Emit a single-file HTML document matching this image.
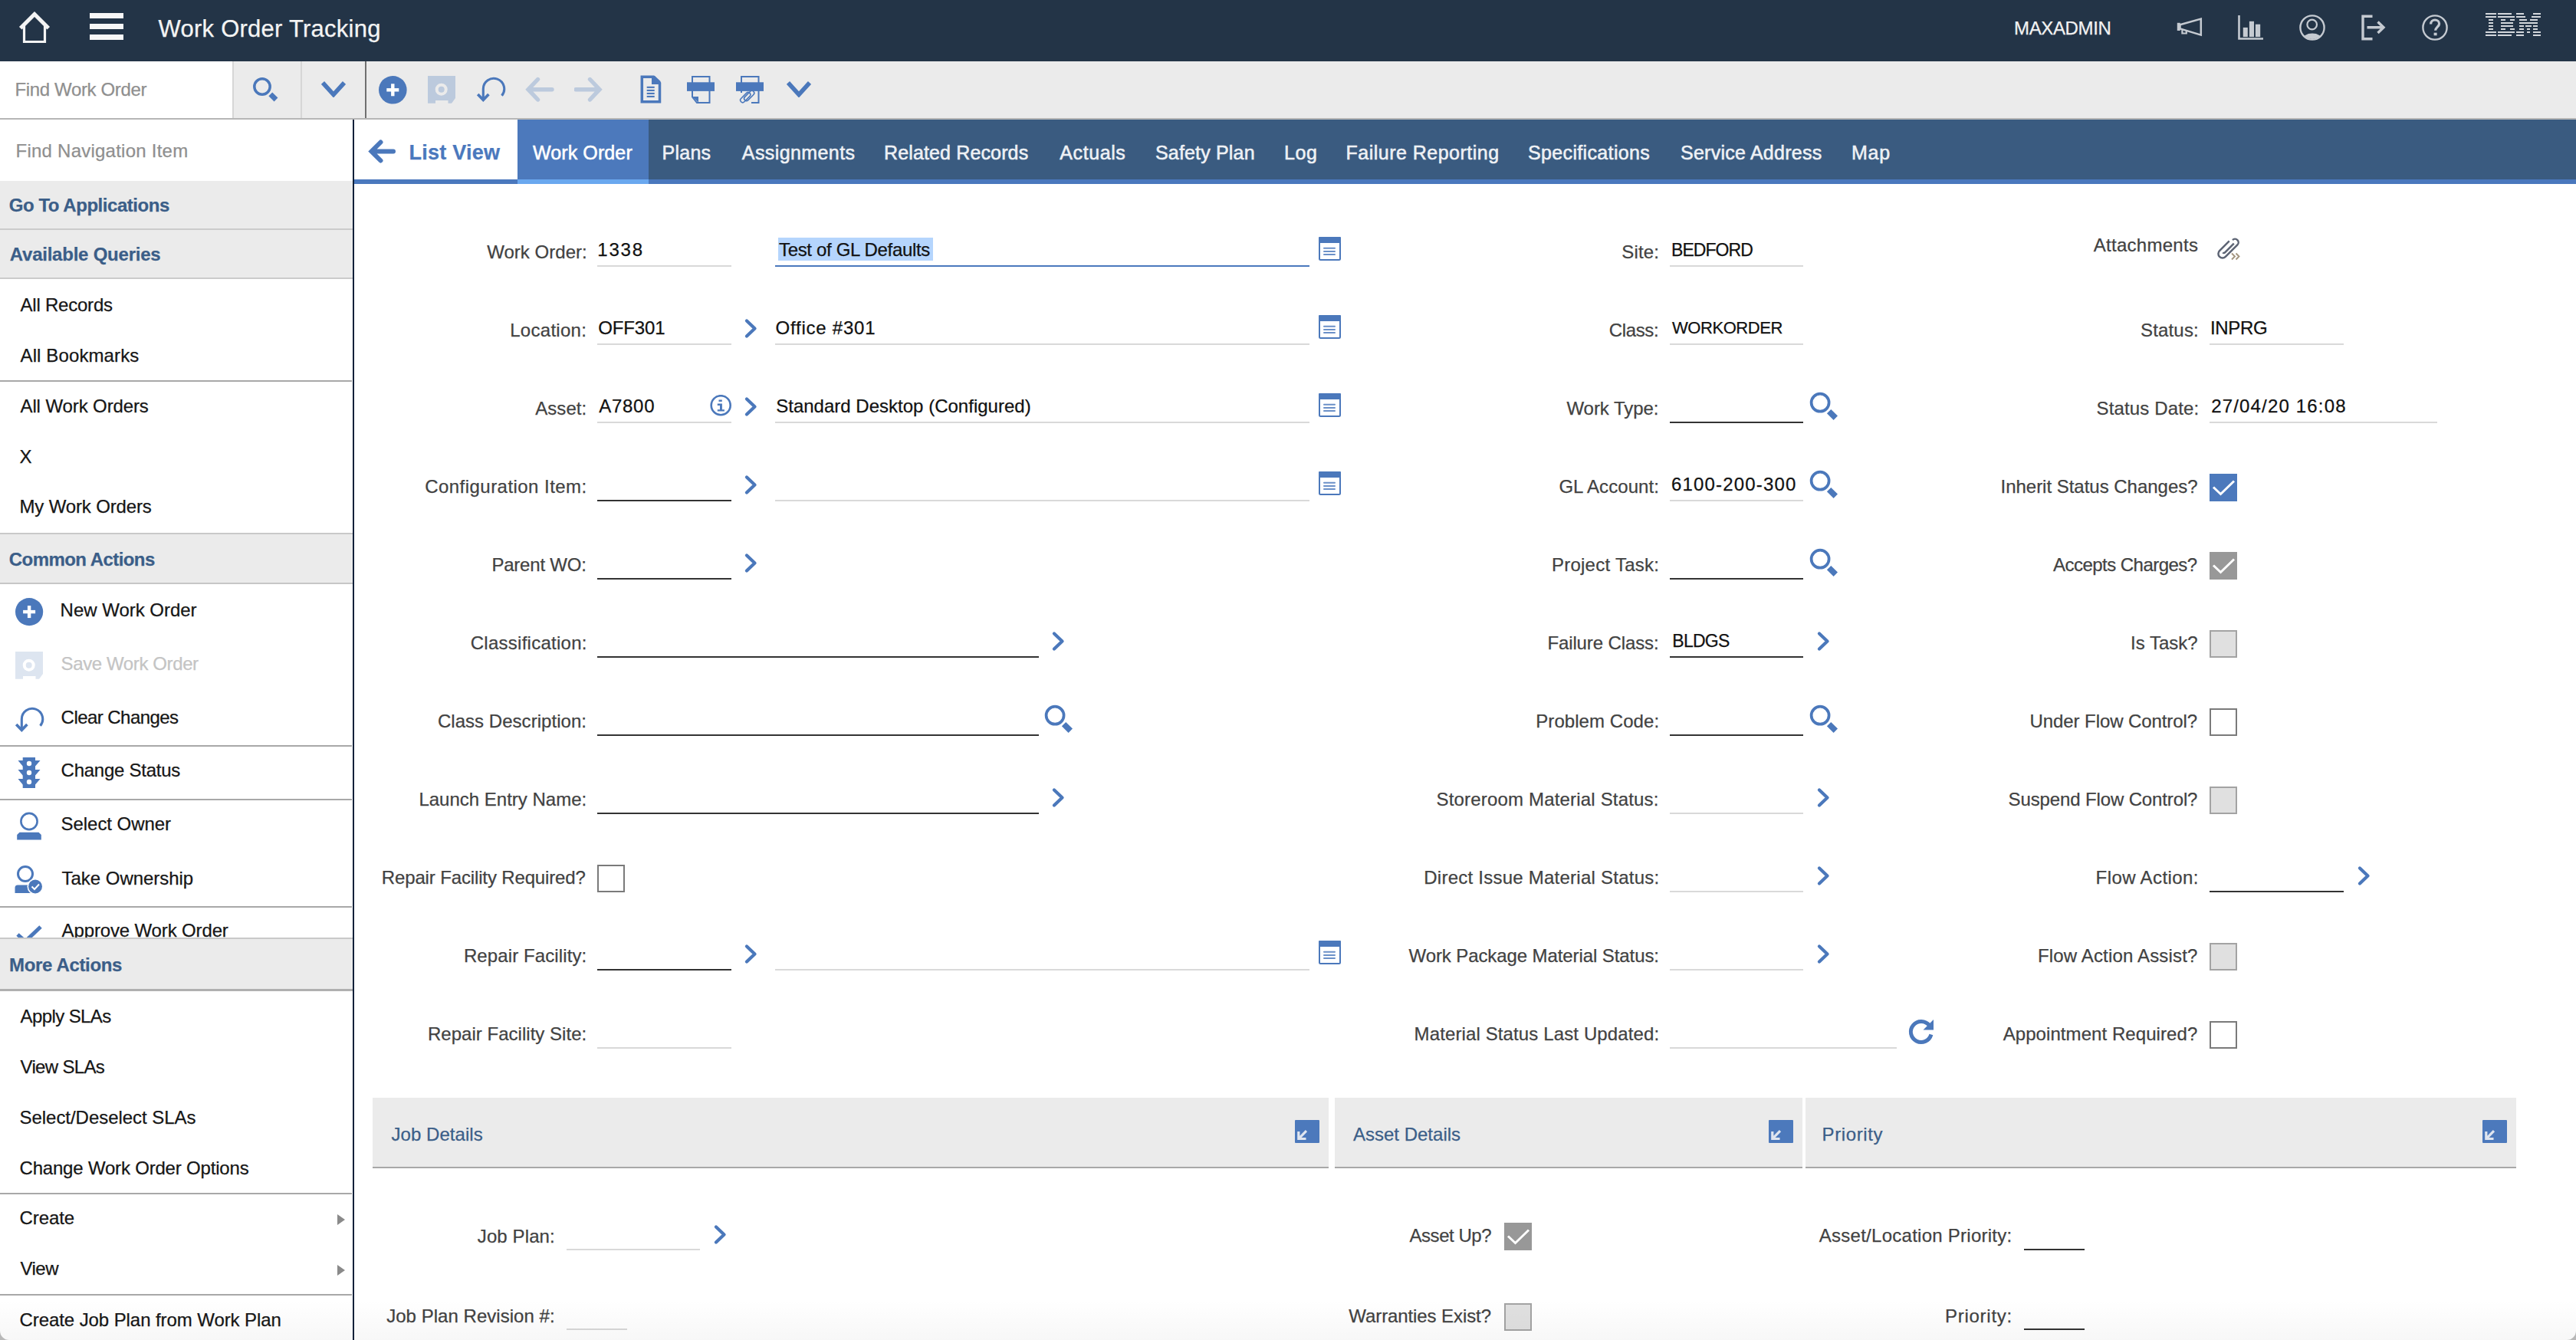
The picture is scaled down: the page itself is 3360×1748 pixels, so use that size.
<!DOCTYPE html><html><head><meta charset="utf-8"><style>html,body{margin:0;padding:0;width:3360px;height:1748px;overflow:hidden;background:#fff}body{position:relative;font-family:"Liberation Sans", sans-serif}.t{position:absolute;white-space:nowrap;-webkit-text-stroke:0.25px currentColor}.r{position:absolute;display:block}</style></head><body>
<div class="r" style="left:0px;top:0px;width:3360px;height:80px;background:#233447;"></div>
<svg class="r" style="left:22.0px;top:12.0px" width="48" height="48" viewBox="0 0 48 48"><path d="M6.5 23 L23 6.5 L39.5 23" fill="none" stroke="#f4f4f4" stroke-width="5" stroke-linecap="square"/><path d="M9.5 22 V42.5 H36.5 V22" fill="none" stroke="#f4f4f4" stroke-width="3.2"/></svg>
<div class="r" style="left:117px;top:17px;width:44px;height:7px;background:#f7f7f7;"></div>
<div class="r" style="left:117px;top:31px;width:44px;height:7px;background:#f7f7f7;"></div>
<div class="r" style="left:117px;top:45px;width:44px;height:7px;background:#f7f7f7;"></div>
<div class="t" style="left:206.5px;top:22.1px;font-size:31px;line-height:31px;color:#f4f4f4;letter-spacing:0.25px;">Work Order Tracking</div>
<div class="t" style="left:2627.0px;top:25.3px;font-size:24px;line-height:24px;color:#f2f2f2;letter-spacing:-0.36px;">MAXADMIN</div>
<svg class="r" style="left:2836.0px;top:18.0px" width="40" height="34" viewBox="0 0 40 34"><path d="M7.5 14.2 L34.8 6.6 V27.6 L7.5 19.4 Z" fill="none" stroke="#c5cad1" stroke-width="2.5" stroke-linejoin="miter"/><rect x="3.8" y="11.8" width="4" height="10.2" fill="#c5cad1"/><path d="M10.4 20.5 V25.5 H15.8 V22" fill="none" stroke="#c5cad1" stroke-width="2.2"/></svg>
<svg class="r" style="left:2918.0px;top:18.0px" width="36" height="36" viewBox="0 0 36 36"><path d="M2.5 2 V32.5 H34" fill="none" stroke="#c5cad1" stroke-width="2.6"/><rect x="7.8" y="17.9" width="6" height="12.2" fill="#c5cad1"/><rect x="15.9" y="9.8" width="6.1" height="20.3" fill="#c5cad1"/><rect x="23.9" y="13.7" width="6.3" height="16.4" fill="#c5cad1"/></svg>
<svg class="r" style="left:2998.0px;top:18.0px" width="36" height="36" viewBox="0 0 36 36"><defs><clipPath id="uc"><circle cx="18" cy="18" r="15"/></clipPath></defs><circle cx="18" cy="18" r="15.6" fill="none" stroke="#c5cad1" stroke-width="2.4"/><circle cx="17.7" cy="14" r="6.3" fill="none" stroke="#c5cad1" stroke-width="2.2"/><ellipse cx="18" cy="34" rx="13" ry="8.5" fill="#c5cad1" clip-path="url(#uc)"/></svg>
<svg class="r" style="left:3078.0px;top:18.0px" width="36" height="36" viewBox="0 0 36 36"><path d="M16.5 3.3 H4 V32.7 H16.5" fill="none" stroke="#c5cad1" stroke-width="3.4"/><path d="M9.5 17.8 H30 M23.5 10.5 L31 17.8 L23.5 25" fill="none" stroke="#c5cad1" stroke-width="3.4"/></svg>
<svg class="r" style="left:3158.0px;top:18.0px" width="36" height="36" viewBox="0 0 36 36"><circle cx="18" cy="18" r="15.6" fill="none" stroke="#c5cad1" stroke-width="2.4"/><path d="M12.6 13.6 C12.6 9.8 15.2 8 18 8 C21 8 23.6 10 23.6 13 C23.6 16.7 18.6 17.6 18.6 21.8" fill="none" stroke="#c5cad1" stroke-width="3.2"/><rect x="16.6" y="24.7" width="4" height="3.6" fill="#c5cad1"/></svg>
<svg class="r" style="left:3240.0px;top:16.0px" width="78" height="34" viewBox="0 0 78 34"><rect x="2" y="1" width="14" height="2" fill="#d3d7dc"/><rect x="18" y="1" width="18" height="2" fill="#d3d7dc"/><rect x="42" y="1" width="10" height="2" fill="#d3d7dc"/><rect x="64" y="1" width="10" height="2" fill="#d3d7dc"/><rect x="2" y="5" width="14" height="2" fill="#d3d7dc"/><rect x="18" y="5" width="22" height="2" fill="#d3d7dc"/><rect x="42" y="5" width="12" height="2" fill="#d3d7dc"/><rect x="62" y="5" width="12" height="2" fill="#d3d7dc"/><rect x="6" y="9" width="6" height="2" fill="#d3d7dc"/><rect x="22" y="9" width="6" height="2" fill="#d3d7dc"/><rect x="34" y="9" width="6" height="2" fill="#d3d7dc"/><rect x="46" y="9" width="10" height="2" fill="#d3d7dc"/><rect x="60" y="9" width="10" height="2" fill="#d3d7dc"/><rect x="6" y="13" width="6" height="2" fill="#d3d7dc"/><rect x="22" y="13" width="16" height="2" fill="#d3d7dc"/><rect x="46" y="13" width="24" height="2" fill="#d3d7dc"/><rect x="6" y="17" width="6" height="2" fill="#d3d7dc"/><rect x="22" y="17" width="16" height="2" fill="#d3d7dc"/><rect x="46" y="17" width="6" height="2" fill="#d3d7dc"/><rect x="54" y="17" width="8" height="2" fill="#d3d7dc"/><rect x="64" y="17" width="6" height="2" fill="#d3d7dc"/><rect x="6" y="21" width="6" height="2" fill="#d3d7dc"/><rect x="22" y="21" width="6" height="2" fill="#d3d7dc"/><rect x="34" y="21" width="6" height="2" fill="#d3d7dc"/><rect x="46" y="21" width="6" height="2" fill="#d3d7dc"/><rect x="56" y="21" width="4" height="2" fill="#d3d7dc"/><rect x="64" y="21" width="6" height="2" fill="#d3d7dc"/><rect x="2" y="25" width="14" height="2" fill="#d3d7dc"/><rect x="18" y="25" width="22" height="2" fill="#d3d7dc"/><rect x="42" y="25" width="10" height="2" fill="#d3d7dc"/><rect x="56" y="25" width="4" height="2" fill="#d3d7dc"/><rect x="64" y="25" width="10" height="2" fill="#d3d7dc"/><rect x="2" y="29" width="14" height="2" fill="#d3d7dc"/><rect x="18" y="29" width="18" height="2" fill="#d3d7dc"/><rect x="42" y="29" width="10" height="2" fill="#d3d7dc"/><rect x="64" y="29" width="10" height="2" fill="#d3d7dc"/></svg>
<div class="r" style="left:0px;top:80px;width:3360px;height:74px;background:#ebebeb;"></div>
<div class="r" style="left:0px;top:154px;width:3360px;height:2px;background:#b6b6b6;"></div>
<div class="r" style="left:0px;top:80px;width:303px;height:74px;background:#ffffff;"></div>
<div class="r" style="left:303px;top:80px;width:2px;height:74px;background:#d6d6d6;"></div>
<div class="r" style="left:392px;top:80px;width:2px;height:74px;background:#d6d6d6;"></div>
<div class="r" style="left:476px;top:80px;width:2px;height:74px;background:#707070;"></div>
<div class="t" style="left:19.5px;top:105.3px;font-size:24px;line-height:24px;color:#8f8f8f;letter-spacing:-0.36px;">Find Work Order</div>
<svg class="r" style="left:328.0px;top:100.0px" width="40" height="40" viewBox="0 0 40 40"><circle cx="14" cy="13" r="10.2" fill="none" stroke="#4b78bb" stroke-width="3.5"/><path d="M24.8 22.8 L32 30" stroke="#4b78bb" stroke-width="6.8"/></svg>
<svg class="r" style="left:419.0px;top:106.0px" width="32" height="21" viewBox="0 0 32 21"><path d="M2 2 L16.0 17.4 L30 2" fill="none" stroke="#4b78bb" stroke-width="5.6" stroke-linejoin="miter" stroke-miterlimit="10"/></svg>
<svg class="r" style="left:493.7px;top:98.6px" width="37" height="37" viewBox="0 0 37 37"><circle cx="18.3" cy="18.3" r="18.3" fill="#4b78bb"/><rect x="10.3" y="16.1" width="16" height="4.4" fill="#ffffff"/><rect x="16.1" y="10.3" width="4.4" height="16" fill="#ffffff"/></svg>
<svg class="r" style="left:558.0px;top:99.0px" width="36" height="36" viewBox="0 0 36 36"><path d="M0 0 H36 V29 L31 35.8 H0 Z" fill="#bccadd"/><rect x="10" y="32" width="16.5" height="4" fill="#ebebeb"/><circle cx="17.7" cy="17.7" r="8" fill="#ebebeb"/><circle cx="17.7" cy="17.7" r="4" fill="#bccadd"/></svg>
<svg class="r" style="left:621.0px;top:98.5px" width="40" height="38" viewBox="0 0 40 38"><path d="M33.5 25.8 A13.7 13.7 0 1 0 9.3 17 V30" fill="none" stroke="#4b78bb" stroke-width="3.1"/><path d="M2.2 24 L9.3 31.3 L16.4 24" fill="none" stroke="#4b78bb" stroke-width="3.6"/></svg>
<svg class="r" style="left:685.0px;top:99.0px" width="38" height="36" viewBox="0 0 38 36"><path d="M35 17.7 H6 M16.5 4.5 L4 17.7 L16.5 31" fill="none" stroke="#bccadd" stroke-width="5.4" stroke-linecap="round"/></svg>
<svg class="r" style="left:749.0px;top:99.0px" width="38" height="36" viewBox="0 0 38 36"><path d="M2 17.7 H31 M20.5 4.5 L33 17.7 L20.5 31" fill="none" stroke="#bccadd" stroke-width="5.4" stroke-linecap="round"/></svg>
<svg class="r" style="left:835.0px;top:98.0px" width="28" height="38" viewBox="0 0 28 38"><path d="M2.3 2.3 H17.5 L25.5 10.5 V34.8 H2.3 Z" fill="none" stroke="#4b78bb" stroke-width="3.5"/><path d="M15 1 V12 H26.5 V8 L19 1 Z" fill="#4b78bb"/><rect x="8.7" y="14.8" width="10" height="2.1" fill="#4b78bb"/><rect x="8.7" y="18.9" width="10" height="2.1" fill="#4b78bb"/><rect x="8.7" y="22.9" width="10" height="2.1" fill="#4b78bb"/><rect x="8.7" y="26.9" width="10" height="2.1" fill="#4b78bb"/></svg>
<svg class="r" style="left:896.0px;top:99.0px" width="36" height="36" viewBox="0 0 36 36"><path d="M7 10 V1 H29.5 V10" fill="none" stroke="#4b78bb" stroke-width="2"/><rect x="0" y="8.3" width="36" height="11.6" fill="#4b78bb"/><path d="M7 19 V27.5 L13 35 H29.5 V19" fill="none" stroke="#4b78bb" stroke-width="2"/><path d="M7 27 H15 V35 Z" fill="#4b78bb"/></svg>
<svg class="r" style="left:960.0px;top:99.0px" width="36" height="36" viewBox="0 0 36 36"><path d="M7 10 V1 H29.5 V10" fill="none" stroke="#4b78bb" stroke-width="2"/><rect x="0" y="8.3" width="36" height="11.6" fill="#4b78bb"/><path d="M7 19 V22 M29.5 19 V35 H20" fill="none" stroke="#4b78bb" stroke-width="2"/><g transform="rotate(-45 14 27)" fill="none" stroke="#4b78bb" stroke-width="1.6"><rect x="4" y="23.5" width="16" height="6" rx="3"/><rect x="9" y="25.5" width="16" height="6" rx="3"/></g></svg>
<svg class="r" style="left:1026.0px;top:106.0px" width="32" height="21" viewBox="0 0 32 21"><path d="M2 2 L16.0 17.4 L30 2" fill="none" stroke="#4b78bb" stroke-width="5.6" stroke-linejoin="miter" stroke-miterlimit="10"/></svg>
<div class="r" style="left:460px;top:156px;width:2px;height:1592px;background:#10213a;"></div>
<div class="t" style="left:20.5px;top:185.1px;font-size:24px;line-height:24px;color:#8f8f8f;letter-spacing:0.24px;">Find Navigation Item</div>
<div class="r" style="left:0px;top:236px;width:460px;height:62px;background:#ebebeb;"></div>
<div class="r" style="left:0px;top:298px;width:460px;height:2px;background:#cbcbcb;"></div>
<div class="t" style="left:11.8px;top:256.4px;font-size:24px;line-height:24px;color:#3b5e88;font-weight:700;letter-spacing:-0.46px;">Go To Applications</div>
<div class="r" style="left:0px;top:300px;width:460px;height:62px;background:#ebebeb;"></div>
<div class="r" style="left:0px;top:362px;width:460px;height:2px;background:#cbcbcb;"></div>
<div class="t" style="left:12.8px;top:319.7px;font-size:24px;line-height:24px;color:#3b5e88;font-weight:700;letter-spacing:-0.23px;">Available Queries</div>
<div class="t" style="left:26.5px;top:386.0px;font-size:24px;line-height:24px;color:#161616;letter-spacing:-0.22px;">All Records</div>
<div class="t" style="left:26.5px;top:451.7px;font-size:24px;line-height:24px;color:#161616;letter-spacing:0.12px;">All Bookmarks</div>
<div class="r" style="left:0px;top:496px;width:459px;height:2px;background:#a8a8a8;"></div>
<div class="t" style="left:26.5px;top:517.7px;font-size:24px;line-height:24px;color:#161616;letter-spacing:-0.11px;">All Work Orders</div>
<div class="t" style="left:25.5px;top:583.5px;font-size:24px;line-height:24px;color:#161616;">X</div>
<div class="t" style="left:25.5px;top:648.7px;font-size:24px;line-height:24px;color:#161616;letter-spacing:-0.15px;">My Work Orders</div>
<div class="r" style="left:0px;top:696px;width:460px;height:64px;background:#ebebeb;"></div>
<div class="r" style="left:0px;top:760px;width:460px;height:2px;background:#c6c6c6;"></div>
<div class="t" style="left:11.8px;top:718.0px;font-size:24px;line-height:24px;color:#3b5e88;font-weight:700;letter-spacing:-0.56px;">Common Actions</div>
<div class="r" style="left:0px;top:695px;width:460px;height:2px;background:#c9c9c9;"></div>
<div class="t" style="left:78.6px;top:783.7px;font-size:24px;line-height:24px;color:#161616;letter-spacing:-0.02px;">New Work Order</div>
<div class="t" style="left:79.6px;top:853.8px;font-size:24px;line-height:24px;color:#c4c4c4;letter-spacing:-0.39px;">Save Work Order</div>
<div class="t" style="left:79.6px;top:923.6px;font-size:24px;line-height:24px;color:#161616;letter-spacing:-0.55px;">Clear Changes</div>
<div class="r" style="left:0px;top:972px;width:459px;height:2px;background:#a8a8a8;"></div>
<div class="t" style="left:79.6px;top:993.3px;font-size:24px;line-height:24px;color:#161616;letter-spacing:-0.25px;">Change Status</div>
<div class="r" style="left:0px;top:1042px;width:459px;height:2px;background:#a8a8a8;"></div>
<div class="t" style="left:79.6px;top:1063.4px;font-size:24px;line-height:24px;color:#161616;letter-spacing:-0.06px;">Select Owner</div>
<div class="t" style="left:80.6px;top:1133.6px;font-size:24px;line-height:24px;color:#161616;letter-spacing:-0.04px;">Take Ownership</div>
<div class="r" style="left:0px;top:1182px;width:459px;height:2px;background:#a8a8a8;"></div>
<div class="r" style="left:0;top:1184px;width:460px;height:40px;overflow:hidden">
<div class="t" style="left:80.6px;top:17.7px;font-size:24px;line-height:24px;color:#161616;letter-spacing:-0.14px;">Approve Work Order</div>
<svg class="r" style="left:20.0px;top:21.0px" width="36" height="24" viewBox="0 0 36 24"><path d="M3 14 L13 23 L33 4" fill="none" stroke="#4b78bb" stroke-width="5"/></svg>
</div>
<div class="r" style="left:0px;top:1224px;width:460px;height:66px;background:#ebebeb;"></div>
<div class="r" style="left:0px;top:1223px;width:460px;height:2px;background:#c9c9c9;"></div>
<div class="r" style="left:0px;top:1290px;width:460px;height:3px;background:#b0b0b0;"></div>
<div class="t" style="left:12.1px;top:1247.2px;font-size:24px;line-height:24px;color:#3b5e88;font-weight:700;letter-spacing:-0.35px;">More Actions</div>
<div class="t" style="left:26.5px;top:1313.9px;font-size:24px;line-height:24px;color:#161616;letter-spacing:-0.59px;">Apply SLAs</div>
<div class="t" style="left:26.5px;top:1380.1px;font-size:24px;line-height:24px;color:#161616;letter-spacing:-0.66px;">View SLAs</div>
<div class="t" style="left:25.5px;top:1445.6px;font-size:24px;line-height:24px;color:#161616;letter-spacing:-0.04px;">Select/Deselect SLAs</div>
<div class="t" style="left:25.5px;top:1511.8px;font-size:24px;line-height:24px;color:#161616;letter-spacing:-0.19px;">Change Work Order Options</div>
<div class="r" style="left:0px;top:1556px;width:459px;height:2px;background:#a8a8a8;"></div>
<div class="t" style="left:25.5px;top:1577.3px;font-size:24px;line-height:24px;color:#161616;letter-spacing:-0.08px;">Create</div>
<div class="t" style="left:26.5px;top:1643.2px;font-size:24px;line-height:24px;color:#161616;letter-spacing:-0.53px;">View</div>
<div class="r" style="left:0px;top:1688px;width:459px;height:2px;background:#a8a8a8;"></div>
<div class="t" style="left:25.5px;top:1710.2px;font-size:24px;line-height:24px;color:#161616;letter-spacing:-0.08px;">Create Job Plan from Work Plan</div>
<svg class="r" style="left:438.0px;top:1583.0px" width="14" height="16" viewBox="0 0 14 16"><path d="M2 1 L12 8 L2 15 Z" fill="#8a8a8a"/></svg>
<svg class="r" style="left:438.0px;top:1649.0px" width="14" height="16" viewBox="0 0 14 16"><path d="M2 1 L12 8 L2 15 Z" fill="#8a8a8a"/></svg>
<svg class="r" style="left:19.5px;top:780.3px" width="37" height="37" viewBox="0 0 37 37"><circle cx="18.1" cy="18.1" r="18.1" fill="#4b78bb"/><rect x="10.100000000000001" y="15.900000000000002" width="16" height="4.4" fill="#ffffff"/><rect x="15.900000000000002" y="10.100000000000001" width="4.4" height="16" fill="#ffffff"/></svg>
<svg class="r" style="left:20.0px;top:850.0px" width="36" height="36" viewBox="0 0 36 36"><path d="M0 0 H36 V29 L31 35.8 H0 Z" fill="#dde5f0"/><rect x="10" y="32" width="16.5" height="4" fill="#ffffff"/><circle cx="17.7" cy="17.7" r="8" fill="#ffffff"/><circle cx="17.7" cy="17.7" r="4" fill="#dde5f0"/></svg>
<svg class="r" style="left:19.0px;top:921.0px" width="40" height="38" viewBox="0 0 40 38"><path d="M33.5 25.8 A13.7 13.7 0 1 0 9.3 17 V30" fill="none" stroke="#4b78bb" stroke-width="3.1"/><path d="M2.2 24 L9.3 31.3 L16.4 24" fill="none" stroke="#4b78bb" stroke-width="3.6"/></svg>
<svg class="r" style="left:22.0px;top:986.0px" width="32" height="44" viewBox="0 0 32 44"><rect x="7.7" y="2" width="16.3" height="40" fill="#4b78bb"/><path d="M1.5 6 H30.5 L24 13.5 H7.7 Z M1.5 18 H30.5 L24 25.5 H7.7 Z M1.5 30 H30.5 L24 37.5 H7.7 Z" fill="#4b78bb"/><circle cx="16" cy="10" r="3.2" fill="#fff"/><circle cx="16" cy="22" r="3.2" fill="#fff"/><circle cx="16" cy="34" r="3.2" fill="#fff"/></svg>
<svg class="r" style="left:21.0px;top:1059.0px" width="34" height="38" viewBox="0 0 34 38"><circle cx="17" cy="12.5" r="10.6" fill="none" stroke="#4b78bb" stroke-width="2.6"/><path d="M1.2 36.5 V30 L4.5 26.7 H29.5 L32.8 30 V36.5 Z" fill="#4b78bb"/></svg>
<svg class="r" style="left:18.0px;top:1129.0px" width="40" height="38" viewBox="0 0 40 38"><ellipse cx="15" cy="11" rx="9.5" ry="9.5" fill="none" stroke="#4b78bb" stroke-width="3"/><path d="M1.5 36 V29 Q1.5 25.5 5 25.5 H22 V36 Z" fill="#4b78bb"/><circle cx="28" cy="27.5" r="10.5" fill="#fff"/><circle cx="28" cy="27.5" r="9" fill="#4b78bb"/><path d="M23.5 27.5 L27 31 L33 24.5" fill="none" stroke="#fff" stroke-width="2"/></svg>
<div class="r" style="left:462px;top:156px;width:2898px;height:78px;background:#3a5b80;"></div>
<div class="r" style="left:462px;top:234px;width:2898px;height:6px;background:#4a78bd;"></div>
<div class="r" style="left:462px;top:156px;width:213px;height:78px;background:#ffffff;"></div>
<div class="r" style="left:675px;top:156px;width:171px;height:78px;background:#4c79bc;"></div>
<div class="r" style="left:675px;top:234px;width:171px;height:6px;background:#6aa8ef;"></div>
<svg class="r" style="left:479.0px;top:180.0px" width="38" height="36" viewBox="0 0 38 36"><path d="M34 17.5 H7 M17.5 5.5 L5.5 17.5 L17.5 29.5" fill="none" stroke="#4b78bb" stroke-width="6" stroke-linecap="round"/></svg>
<div class="t" style="left:533.6px;top:185.5px;font-size:27px;line-height:27px;color:#4a78bd;font-weight:700;letter-spacing:0.22px;">List View</div>
<div class="t" style="left:695.0px;top:187.2px;font-size:25px;line-height:25px;color:#ffffff;letter-spacing:0.11px;-webkit-text-stroke:0.55px currentColor">Work Order</div>
<div class="t" style="left:863.5px;top:187.2px;font-size:25px;line-height:25px;color:#eef1f5;letter-spacing:0.25px;-webkit-text-stroke:0.55px currentColor">Plans</div>
<div class="t" style="left:967.8px;top:187.2px;font-size:25px;line-height:25px;color:#eef1f5;letter-spacing:0.41px;-webkit-text-stroke:0.55px currentColor">Assignments</div>
<div class="t" style="left:1153.0px;top:187.2px;font-size:25px;line-height:25px;color:#eef1f5;letter-spacing:0.14px;-webkit-text-stroke:0.55px currentColor">Related Records</div>
<div class="t" style="left:1382.3px;top:187.2px;font-size:25px;line-height:25px;color:#eef1f5;letter-spacing:0.58px;-webkit-text-stroke:0.55px currentColor">Actuals</div>
<div class="t" style="left:1507.0px;top:187.2px;font-size:25px;line-height:25px;color:#eef1f5;letter-spacing:0.17px;-webkit-text-stroke:0.55px currentColor">Safety Plan</div>
<div class="t" style="left:1675.0px;top:187.2px;font-size:25px;line-height:25px;color:#eef1f5;letter-spacing:0.60px;-webkit-text-stroke:0.55px currentColor">Log</div>
<div class="t" style="left:1755.6px;top:187.2px;font-size:25px;line-height:25px;color:#eef1f5;letter-spacing:0.48px;-webkit-text-stroke:0.55px currentColor">Failure Reporting</div>
<div class="t" style="left:1993.0px;top:187.2px;font-size:25px;line-height:25px;color:#eef1f5;letter-spacing:0.35px;-webkit-text-stroke:0.55px currentColor">Specifications</div>
<div class="t" style="left:2192.0px;top:187.2px;font-size:25px;line-height:25px;color:#eef1f5;letter-spacing:0.25px;-webkit-text-stroke:0.55px currentColor">Service Address</div>
<div class="t" style="left:2415.0px;top:187.2px;font-size:25px;line-height:25px;color:#eef1f5;letter-spacing:0.75px;-webkit-text-stroke:0.55px currentColor">Map</div>
<div class="t" style="left:635.2px;top:317.2px;font-size:24px;line-height:24px;color:#424242;letter-spacing:0.03px;">Work Order:</div>
<div class="t" style="left:665.2px;top:419.2px;font-size:24px;line-height:24px;color:#424242;letter-spacing:0.29px;">Location:</div>
<div class="t" style="left:698.2px;top:521.2px;font-size:24px;line-height:24px;color:#424242;letter-spacing:0.06px;">Asset:</div>
<div class="t" style="left:554.2px;top:623.2px;font-size:24px;line-height:24px;color:#424242;letter-spacing:0.46px;">Configuration Item:</div>
<div class="t" style="left:641.4px;top:725.2px;font-size:24px;line-height:24px;color:#424242;letter-spacing:-0.21px;">Parent WO:</div>
<div class="t" style="left:613.7px;top:827.2px;font-size:24px;line-height:24px;color:#424242;letter-spacing:0.27px;">Classification:</div>
<div class="t" style="left:570.9px;top:929.2px;font-size:24px;line-height:24px;color:#424242;letter-spacing:0.04px;">Class Description:</div>
<div class="t" style="left:546.4px;top:1031.2px;font-size:24px;line-height:24px;color:#424242;">Launch Entry Name:</div>
<div class="t" style="left:497.8px;top:1133.2px;font-size:24px;line-height:24px;color:#424242;letter-spacing:-0.14px;">Repair Facility Required?</div>
<div class="t" style="left:604.9px;top:1235.2px;font-size:24px;line-height:24px;color:#424242;letter-spacing:0.11px;">Repair Facility:</div>
<div class="t" style="left:557.9px;top:1337.2px;font-size:24px;line-height:24px;color:#424242;letter-spacing:0.03px;">Repair Facility Site:</div>
<div class="r" style="left:1015px;top:310px;width:202px;height:30px;background:#b5d5fd;"></div>
<div class="t" style="left:779.3px;top:313.7px;font-size:24px;line-height:24px;color:#111111;letter-spacing:1.77px;">1338</div>
<div class="t" style="left:1016.0px;top:313.7px;font-size:24px;line-height:24px;color:#111111;letter-spacing:-0.33px;">Test of GL Defaults</div>
<div class="t" style="left:780.3px;top:415.7px;font-size:24px;line-height:24px;color:#111111;letter-spacing:-0.16px;">OFF301</div>
<div class="t" style="left:1011.5px;top:415.7px;font-size:24px;line-height:24px;color:#111111;letter-spacing:0.77px;">Office #301</div>
<div class="t" style="left:781.3px;top:517.7px;font-size:24px;line-height:24px;color:#111111;letter-spacing:0.70px;">A7800</div>
<div class="t" style="left:1012.2px;top:517.7px;font-size:24px;line-height:24px;color:#111111;letter-spacing:0.01px;">Standard Desktop (Configured)</div>
<div class="r" style="left:779px;top:346px;width:175px;height:2px;background:#d9d9d9;"></div>
<div class="r" style="left:1011px;top:346px;width:697px;height:2px;background:#4a78bd;"></div>
<svg class="r" style="left:1719.5px;top:309.0px" width="29" height="31" viewBox="0 0 29 31"><rect x="1" y="1" width="27" height="29" rx="1.5" fill="none" stroke="#4b78bb" stroke-width="2"/><rect x="0" y="0" width="29" height="8" rx="1" fill="#4b78bb"/><rect x="6" y="13.8" width="16" height="2" rx="1" fill="#6b90c8"/><rect x="6" y="17.9" width="16" height="2" rx="1" fill="#6b90c8"/><rect x="6" y="22.0" width="16" height="2" rx="1" fill="#6b90c8"/></svg>
<div class="r" style="left:779px;top:448px;width:175px;height:2px;background:#d9d9d9;"></div>
<svg class="r" style="left:969.0px;top:413.0px" width="22" height="30" viewBox="0 0 22 30"><path d="M5 5.5 L15.5 15.5 L5 25.5" fill="none" stroke="#4b78bb" stroke-width="4.3" stroke-linecap="round" stroke-linejoin="round"/></svg>
<div class="r" style="left:1011px;top:448px;width:697px;height:2px;background:#d9d9d9;"></div>
<svg class="r" style="left:1719.5px;top:411.0px" width="29" height="31" viewBox="0 0 29 31"><rect x="1" y="1" width="27" height="29" rx="1.5" fill="none" stroke="#4b78bb" stroke-width="2"/><rect x="0" y="0" width="29" height="8" rx="1" fill="#4b78bb"/><rect x="6" y="13.8" width="16" height="2" rx="1" fill="#6b90c8"/><rect x="6" y="17.9" width="16" height="2" rx="1" fill="#6b90c8"/><rect x="6" y="22.0" width="16" height="2" rx="1" fill="#6b90c8"/></svg>
<div class="r" style="left:779px;top:550px;width:175px;height:2px;background:#d9d9d9;"></div>
<svg class="r" style="left:925.5px;top:514.5px" width="29" height="29" viewBox="0 0 29 29"><circle cx="14.2" cy="13.7" r="12.5" fill="none" stroke="#4b78bb" stroke-width="2.6"/><rect x="11.5" y="6.5" width="4.3" height="2.4" fill="#4b78bb"/><path d="M9.8 11.5 H15.9 V19.2 H18.9 V21.6 H9.8 V19.2 H13 V13.9 H9.8 Z" fill="#4b78bb"/></svg>
<svg class="r" style="left:969.0px;top:515.0px" width="22" height="30" viewBox="0 0 22 30"><path d="M5 5.5 L15.5 15.5 L5 25.5" fill="none" stroke="#4b78bb" stroke-width="4.3" stroke-linecap="round" stroke-linejoin="round"/></svg>
<div class="r" style="left:1011px;top:550px;width:697px;height:2px;background:#d9d9d9;"></div>
<svg class="r" style="left:1719.5px;top:513.0px" width="29" height="31" viewBox="0 0 29 31"><rect x="1" y="1" width="27" height="29" rx="1.5" fill="none" stroke="#4b78bb" stroke-width="2"/><rect x="0" y="0" width="29" height="8" rx="1" fill="#4b78bb"/><rect x="6" y="13.8" width="16" height="2" rx="1" fill="#6b90c8"/><rect x="6" y="17.9" width="16" height="2" rx="1" fill="#6b90c8"/><rect x="6" y="22.0" width="16" height="2" rx="1" fill="#6b90c8"/></svg>
<div class="r" style="left:779px;top:652px;width:175px;height:2px;background:#333333;"></div>
<svg class="r" style="left:969.0px;top:617.0px" width="22" height="30" viewBox="0 0 22 30"><path d="M5 5.5 L15.5 15.5 L5 25.5" fill="none" stroke="#4b78bb" stroke-width="4.3" stroke-linecap="round" stroke-linejoin="round"/></svg>
<div class="r" style="left:1011px;top:652px;width:697px;height:2px;background:#d9d9d9;"></div>
<svg class="r" style="left:1719.5px;top:615.0px" width="29" height="31" viewBox="0 0 29 31"><rect x="1" y="1" width="27" height="29" rx="1.5" fill="none" stroke="#4b78bb" stroke-width="2"/><rect x="0" y="0" width="29" height="8" rx="1" fill="#4b78bb"/><rect x="6" y="13.8" width="16" height="2" rx="1" fill="#6b90c8"/><rect x="6" y="17.9" width="16" height="2" rx="1" fill="#6b90c8"/><rect x="6" y="22.0" width="16" height="2" rx="1" fill="#6b90c8"/></svg>
<div class="r" style="left:779px;top:754px;width:175px;height:2px;background:#333333;"></div>
<svg class="r" style="left:969.0px;top:719.0px" width="22" height="30" viewBox="0 0 22 30"><path d="M5 5.5 L15.5 15.5 L5 25.5" fill="none" stroke="#4b78bb" stroke-width="4.3" stroke-linecap="round" stroke-linejoin="round"/></svg>
<div class="r" style="left:779px;top:856px;width:576px;height:2px;background:#333333;"></div>
<svg class="r" style="left:1369.5px;top:821.0px" width="22" height="30" viewBox="0 0 22 30"><path d="M5 5.5 L15.5 15.5 L5 25.5" fill="none" stroke="#4b78bb" stroke-width="4.3" stroke-linecap="round" stroke-linejoin="round"/></svg>
<div class="r" style="left:779px;top:958px;width:576px;height:2px;background:#333333;"></div>
<svg class="r" style="left:1360.0px;top:919.0px" width="40" height="40" viewBox="0 0 40 40"><circle cx="16.1" cy="14.2" r="11.5" fill="none" stroke="#4b78bb" stroke-width="3.7"/><path d="M27.6 25.6 L36.3 34.3" stroke="#4b78bb" stroke-width="7.6"/></svg>
<div class="r" style="left:779px;top:1060px;width:576px;height:2px;background:#333333;"></div>
<svg class="r" style="left:1369.5px;top:1025.0px" width="22" height="30" viewBox="0 0 22 30"><path d="M5 5.5 L15.5 15.5 L5 25.5" fill="none" stroke="#4b78bb" stroke-width="4.3" stroke-linecap="round" stroke-linejoin="round"/></svg>
<svg class="r" style="left:779.0px;top:1128.0px" width="36" height="36" viewBox="0 0 36 36"><rect x="1" y="1" width="34" height="34" fill="#ffffff" stroke="#7a7a7a" stroke-width="2"/></svg>
<div class="r" style="left:779px;top:1264px;width:175px;height:2px;background:#333333;"></div>
<svg class="r" style="left:969.0px;top:1229.0px" width="22" height="30" viewBox="0 0 22 30"><path d="M5 5.5 L15.5 15.5 L5 25.5" fill="none" stroke="#4b78bb" stroke-width="4.3" stroke-linecap="round" stroke-linejoin="round"/></svg>
<div class="r" style="left:1011px;top:1264px;width:697px;height:2px;background:#d9d9d9;"></div>
<svg class="r" style="left:1719.5px;top:1227.0px" width="29" height="31" viewBox="0 0 29 31"><rect x="1" y="1" width="27" height="29" rx="1.5" fill="none" stroke="#4b78bb" stroke-width="2"/><rect x="0" y="0" width="29" height="8" rx="1" fill="#4b78bb"/><rect x="6" y="13.8" width="16" height="2" rx="1" fill="#6b90c8"/><rect x="6" y="17.9" width="16" height="2" rx="1" fill="#6b90c8"/><rect x="6" y="22.0" width="16" height="2" rx="1" fill="#6b90c8"/></svg>
<div class="r" style="left:779px;top:1366px;width:175px;height:2px;background:#d9d9d9;"></div>
<div class="t" style="left:2115.3px;top:317.2px;font-size:24px;line-height:24px;color:#424242;letter-spacing:0.17px;">Site:</div>
<div class="t" style="left:2098.8px;top:419.2px;font-size:24px;line-height:24px;color:#424242;letter-spacing:-0.36px;">Class:</div>
<div class="t" style="left:2043.4px;top:521.2px;font-size:24px;line-height:24px;color:#424242;letter-spacing:-0.04px;">Work Type:</div>
<div class="t" style="left:2033.4px;top:623.2px;font-size:24px;line-height:24px;color:#424242;letter-spacing:0.06px;">GL Account:</div>
<div class="t" style="left:2023.9px;top:725.2px;font-size:24px;line-height:24px;color:#424242;letter-spacing:0.26px;">Project Task:</div>
<div class="t" style="left:2018.4px;top:827.2px;font-size:24px;line-height:24px;color:#424242;letter-spacing:-0.11px;">Failure Class:</div>
<div class="t" style="left:2003.3px;top:929.2px;font-size:24px;line-height:24px;color:#424242;letter-spacing:0.06px;">Problem Code:</div>
<div class="t" style="left:1873.5px;top:1031.2px;font-size:24px;line-height:24px;color:#424242;letter-spacing:0.18px;">Storeroom Material Status:</div>
<div class="t" style="left:1857.3px;top:1133.2px;font-size:24px;line-height:24px;color:#424242;letter-spacing:0.24px;">Direct Issue Material Status:</div>
<div class="t" style="left:1837.5px;top:1235.2px;font-size:24px;line-height:24px;color:#424242;letter-spacing:-0.09px;">Work Package Material Status:</div>
<div class="t" style="left:1844.6px;top:1337.2px;font-size:24px;line-height:24px;color:#424242;letter-spacing:0.12px;">Material Status Last Updated:</div>
<div class="t" style="left:2180.0px;top:314.5px;font-size:23px;line-height:23px;color:#111111;letter-spacing:-0.95px;">BEDFORD</div>
<div class="t" style="left:2181.0px;top:417.4px;font-size:22px;line-height:22px;color:#111111;letter-spacing:-0.45px;">WORKORDER</div>
<div class="t" style="left:2180.0px;top:619.7px;font-size:24px;line-height:24px;color:#111111;letter-spacing:1.18px;">6100-200-300</div>
<div class="t" style="left:2181.3px;top:824.5px;font-size:23px;line-height:23px;color:#111111;letter-spacing:-0.73px;">BLDGS</div>
<div class="r" style="left:2178px;top:346px;width:174px;height:2px;background:#d9d9d9;"></div>
<div class="r" style="left:2178px;top:448px;width:174px;height:2px;background:#d9d9d9;"></div>
<div class="r" style="left:2178px;top:550px;width:174px;height:2px;background:#333333;"></div>
<svg class="r" style="left:2358.0px;top:511.0px" width="40" height="40" viewBox="0 0 40 40"><circle cx="16.1" cy="14.2" r="11.5" fill="none" stroke="#4b78bb" stroke-width="3.7"/><path d="M27.6 25.6 L36.3 34.3" stroke="#4b78bb" stroke-width="7.6"/></svg>
<div class="r" style="left:2178px;top:652px;width:174px;height:2px;background:#d9d9d9;"></div>
<svg class="r" style="left:2358.0px;top:613.0px" width="40" height="40" viewBox="0 0 40 40"><circle cx="16.1" cy="14.2" r="11.5" fill="none" stroke="#4b78bb" stroke-width="3.7"/><path d="M27.6 25.6 L36.3 34.3" stroke="#4b78bb" stroke-width="7.6"/></svg>
<div class="r" style="left:2178px;top:754px;width:174px;height:2px;background:#333333;"></div>
<svg class="r" style="left:2358.0px;top:715.0px" width="40" height="40" viewBox="0 0 40 40"><circle cx="16.1" cy="14.2" r="11.5" fill="none" stroke="#4b78bb" stroke-width="3.7"/><path d="M27.6 25.6 L36.3 34.3" stroke="#4b78bb" stroke-width="7.6"/></svg>
<div class="r" style="left:2178px;top:856px;width:174px;height:2px;background:#333333;"></div>
<svg class="r" style="left:2367.5px;top:821.0px" width="22" height="30" viewBox="0 0 22 30"><path d="M5 5.5 L15.5 15.5 L5 25.5" fill="none" stroke="#4b78bb" stroke-width="4.3" stroke-linecap="round" stroke-linejoin="round"/></svg>
<div class="r" style="left:2178px;top:958px;width:174px;height:2px;background:#333333;"></div>
<svg class="r" style="left:2358.0px;top:919.0px" width="40" height="40" viewBox="0 0 40 40"><circle cx="16.1" cy="14.2" r="11.5" fill="none" stroke="#4b78bb" stroke-width="3.7"/><path d="M27.6 25.6 L36.3 34.3" stroke="#4b78bb" stroke-width="7.6"/></svg>
<div class="r" style="left:2178px;top:1060px;width:174px;height:2px;background:#d9d9d9;"></div>
<svg class="r" style="left:2367.5px;top:1025.0px" width="22" height="30" viewBox="0 0 22 30"><path d="M5 5.5 L15.5 15.5 L5 25.5" fill="none" stroke="#4b78bb" stroke-width="4.3" stroke-linecap="round" stroke-linejoin="round"/></svg>
<div class="r" style="left:2178px;top:1162px;width:174px;height:2px;background:#d9d9d9;"></div>
<svg class="r" style="left:2367.5px;top:1127.0px" width="22" height="30" viewBox="0 0 22 30"><path d="M5 5.5 L15.5 15.5 L5 25.5" fill="none" stroke="#4b78bb" stroke-width="4.3" stroke-linecap="round" stroke-linejoin="round"/></svg>
<div class="r" style="left:2178px;top:1264px;width:174px;height:2px;background:#d9d9d9;"></div>
<svg class="r" style="left:2367.5px;top:1229.0px" width="22" height="30" viewBox="0 0 22 30"><path d="M5 5.5 L15.5 15.5 L5 25.5" fill="none" stroke="#4b78bb" stroke-width="4.3" stroke-linecap="round" stroke-linejoin="round"/></svg>
<div class="r" style="left:2178px;top:1366px;width:296px;height:2px;background:#d9d9d9;"></div>
<svg class="r" style="left:2486.0px;top:1326.0px" width="40" height="40" viewBox="0 0 40 40"><path d="M32.9 23.5 A13.5 13.5 0 1 1 30.6 11.8" fill="none" stroke="#4b78bb" stroke-width="5"/><path d="M22.5 17.5 H36 V3.9 Z" fill="#4b78bb"/></svg>
<div class="t" style="left:2730.8px;top:308.1px;font-size:24px;line-height:24px;color:#424242;letter-spacing:0.27px;">Attachments</div>
<svg class="r" style="left:2886.0px;top:306.0px" width="42" height="38" viewBox="0 0 42 38"><g transform="rotate(45 20 18)" fill="none" stroke="#5d6474" stroke-width="2.5"><path d="M14.5 10 V28 A5.5 5.5 0 0 0 25.5 28 V6 A4.5 4.5 0 0 0 16.5 6"/><path d="M21 8 V24.5 A2 2 0 0 1 19 26.5"/></g><path d="M25 24.5 L29 28.5 L25 32.5 M30.5 24.5 L34.5 28.5 L30.5 32.5" fill="none" stroke="#a39580" stroke-width="1.9"/></svg>
<div class="t" style="left:2792.0px;top:419.2px;font-size:24px;line-height:24px;color:#424242;letter-spacing:0.17px;">Status:</div>
<div class="t" style="left:2734.6px;top:521.2px;font-size:24px;line-height:24px;color:#424242;letter-spacing:0.13px;">Status Date:</div>
<div class="t" style="left:2609.5px;top:623.2px;font-size:24px;line-height:24px;color:#424242;letter-spacing:-0.02px;">Inherit Status Changes?</div>
<div class="t" style="left:2678.1px;top:725.2px;font-size:24px;line-height:24px;color:#424242;letter-spacing:-0.54px;">Accepts Charges?</div>
<div class="t" style="left:2779.0px;top:827.2px;font-size:24px;line-height:24px;color:#424242;">Is Task?</div>
<div class="t" style="left:2647.6px;top:929.2px;font-size:24px;line-height:24px;color:#424242;letter-spacing:-0.09px;">Under Flow Control?</div>
<div class="t" style="left:2619.6px;top:1031.2px;font-size:24px;line-height:24px;color:#424242;letter-spacing:-0.13px;">Suspend Flow Control?</div>
<div class="t" style="left:2733.6px;top:1133.2px;font-size:24px;line-height:24px;color:#424242;letter-spacing:0.40px;">Flow Action:</div>
<div class="t" style="left:2657.9px;top:1235.2px;font-size:24px;line-height:24px;color:#424242;letter-spacing:0.17px;">Flow Action Assist?</div>
<div class="t" style="left:2612.7px;top:1337.2px;font-size:24px;line-height:24px;color:#424242;letter-spacing:0.07px;">Appointment Required?</div>
<div class="t" style="left:2883.0px;top:415.7px;font-size:24px;line-height:24px;color:#111111;letter-spacing:-0.33px;">INPRG</div>
<div class="t" style="left:2884.2px;top:517.7px;font-size:24px;line-height:24px;color:#111111;letter-spacing:1.17px;">27/04/20 16:08</div>
<div class="r" style="left:2882px;top:448px;width:175px;height:2px;background:#d9d9d9;"></div>
<div class="r" style="left:2882px;top:550px;width:297px;height:2px;background:#d9d9d9;"></div>
<svg class="r" style="left:2882.0px;top:618.0px" width="36" height="36" viewBox="0 0 36 36"><rect width="36" height="36" fill="#4c79bc"/><path d="M5 17.5 L14.5 26.5 L32 9.5" fill="none" stroke="#fff" stroke-width="3"/></svg>
<svg class="r" style="left:2882.0px;top:720.0px" width="36" height="36" viewBox="0 0 36 36"><rect width="36" height="36" fill="#989898"/><path d="M5 17.5 L14.5 26.5 L32 9.5" fill="none" stroke="#fff" stroke-width="3"/></svg>
<svg class="r" style="left:2882.0px;top:822.0px" width="36" height="36" viewBox="0 0 36 36"><rect x="1" y="1" width="34" height="34" fill="#e0e0e0" stroke="#a3a3a3" stroke-width="2"/></svg>
<svg class="r" style="left:2882.0px;top:924.0px" width="36" height="36" viewBox="0 0 36 36"><rect x="1" y="1" width="34" height="34" fill="#ffffff" stroke="#7a7a7a" stroke-width="2"/></svg>
<svg class="r" style="left:2882.0px;top:1026.0px" width="36" height="36" viewBox="0 0 36 36"><rect x="1" y="1" width="34" height="34" fill="#e0e0e0" stroke="#a3a3a3" stroke-width="2"/></svg>
<div class="r" style="left:2882px;top:1162px;width:175px;height:2px;background:#333333;"></div>
<svg class="r" style="left:3072.5px;top:1127.0px" width="22" height="30" viewBox="0 0 22 30"><path d="M5 5.5 L15.5 15.5 L5 25.5" fill="none" stroke="#4b78bb" stroke-width="4.3" stroke-linecap="round" stroke-linejoin="round"/></svg>
<svg class="r" style="left:2882.0px;top:1230.0px" width="36" height="36" viewBox="0 0 36 36"><rect x="1" y="1" width="34" height="34" fill="#e0e0e0" stroke="#a3a3a3" stroke-width="2"/></svg>
<svg class="r" style="left:2882.0px;top:1332.0px" width="36" height="36" viewBox="0 0 36 36"><rect x="1" y="1" width="34" height="34" fill="#ffffff" stroke="#7a7a7a" stroke-width="2"/></svg>
<div class="r" style="left:486px;top:1432px;width:1247px;height:90px;background:#ebebeb;"></div>
<div class="r" style="left:486px;top:1522px;width:1247px;height:2px;background:#a8a8a8;"></div>
<div class="t" style="left:510.5px;top:1468.1px;font-size:24px;line-height:24px;color:#3b5e88;letter-spacing:0.05px;">Job Details</div>
<svg class="r" style="left:1689.0px;top:1460.8px" width="32" height="30" viewBox="0 0 32 30"><rect width="32" height="30" rx="1" fill="#4c79bc"/><path d="M4.8 15 V24.5 H14.5 M5.5 23.8 L15 14.2" fill="none" stroke="#dfe5ef" stroke-width="3.2"/></svg>
<div class="r" style="left:1741px;top:1432px;width:610px;height:90px;background:#ebebeb;"></div>
<div class="r" style="left:1741px;top:1522px;width:610px;height:2px;background:#a8a8a8;"></div>
<div class="t" style="left:1765.0px;top:1468.1px;font-size:24px;line-height:24px;color:#3b5e88;">Asset Details</div>
<svg class="r" style="left:2306.5px;top:1460.8px" width="32" height="30" viewBox="0 0 32 30"><rect width="32" height="30" rx="1" fill="#4c79bc"/><path d="M4.8 15 V24.5 H14.5 M5.5 23.8 L15 14.2" fill="none" stroke="#dfe5ef" stroke-width="3.2"/></svg>
<div class="r" style="left:2355px;top:1432px;width:927px;height:90px;background:#ebebeb;"></div>
<div class="r" style="left:2355px;top:1522px;width:927px;height:2px;background:#a8a8a8;"></div>
<div class="t" style="left:2376.6px;top:1468.1px;font-size:24px;line-height:24px;color:#3b5e88;letter-spacing:0.61px;">Priority</div>
<svg class="r" style="left:3237.6px;top:1460.8px" width="32" height="30" viewBox="0 0 32 30"><rect width="32" height="30" rx="1" fill="#4c79bc"/><path d="M4.8 15 V24.5 H14.5 M5.5 23.8 L15 14.2" fill="none" stroke="#dfe5ef" stroke-width="3.2"/></svg>
<div class="t" style="left:622.8px;top:1600.7px;font-size:24px;line-height:24px;color:#424242;letter-spacing:0.11px;">Job Plan:</div>
<div class="r" style="left:739px;top:1629px;width:174px;height:2px;background:#d9d9d9;"></div>
<svg class="r" style="left:929.0px;top:1594.5px" width="22" height="30" viewBox="0 0 22 30"><path d="M5 5.5 L15.5 15.5 L5 25.5" fill="none" stroke="#4b78bb" stroke-width="4.3" stroke-linecap="round" stroke-linejoin="round"/></svg>
<div class="t" style="left:504.2px;top:1704.7px;font-size:24px;line-height:24px;color:#424242;letter-spacing:0.03px;">Job Plan Revision #:</div>
<div class="r" style="left:739px;top:1733px;width:79px;height:2px;background:#d9d9d9;"></div>
<div class="t" style="left:1838.5px;top:1600.1px;font-size:24px;line-height:24px;color:#424242;letter-spacing:-0.45px;">Asset Up?</div>
<svg class="r" style="left:1961.6px;top:1595.3px" width="36" height="36" viewBox="0 0 36 36"><rect width="36" height="36" fill="#989898"/><path d="M5 17.5 L14.5 26.5 L32 9.5" fill="none" stroke="#fff" stroke-width="3"/></svg>
<div class="t" style="left:1759.3px;top:1704.7px;font-size:24px;line-height:24px;color:#424242;letter-spacing:-0.09px;">Warranties Exist?</div>
<svg class="r" style="left:1961.6px;top:1700.0px" width="36" height="36" viewBox="0 0 36 36"><rect x="1" y="1" width="34" height="34" fill="#e0e0e0" stroke="#a3a3a3" stroke-width="2"/></svg>
<div class="t" style="left:2372.8px;top:1600.1px;font-size:24px;line-height:24px;color:#424242;letter-spacing:0.26px;">Asset/Location Priority:</div>
<div class="r" style="left:2640px;top:1628.5px;width:79px;height:2px;background:#333333;"></div>
<div class="t" style="left:2537.0px;top:1704.7px;font-size:24px;line-height:24px;color:#424242;letter-spacing:0.73px;">Priority:</div>
<div class="r" style="left:2640px;top:1733px;width:79px;height:2px;background:#333333;"></div>
<div class="r" style="left:0;top:1696px;width:3360px;height:52px;background:linear-gradient(to bottom,rgba(0,0,0,0),rgba(0,0,0,0.03))"></div>
<svg class="r" style="left:0.0px;top:1736.0px" width="12" height="12" viewBox="0 0 12 12"><path d="M0 0 A12 12 0 0 0 12 12 H0 Z" fill="#a8a8a8" opacity="0.8"/></svg>
<svg class="r" style="left:3348.0px;top:1736.0px" width="12" height="12" viewBox="0 0 12 12"><path d="M12 0 A12 12 0 0 1 0 12 H12 Z" fill="#a8a8a8" opacity="0.8"/></svg>
</body></html>
